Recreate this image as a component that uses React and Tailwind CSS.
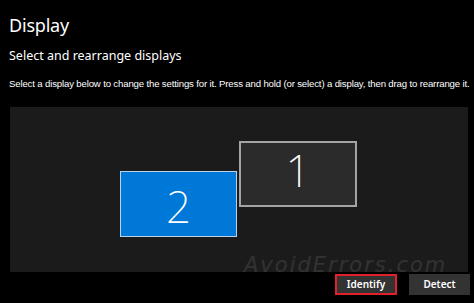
export default function App() {
  return (
    <div className="relative w-[474px] h-[303px] overflow-hidden bg-black text-white font-['Noto_Sans',sans-serif]">
      <div className="px-[9px] pt-[11px]">
        {/* Page title */}
        <h1 className="text-[18px] leading-[28px] font-normal tracking-[-0.2px]">Display</h1>
        <h2 className="mt-[8px] text-[12.5px] leading-[18px]">Select and rearrange displays</h2>
        <p className="mt-[12px] text-[9.6px] leading-[14px] tracking-[-0.15px] whitespace-nowrap font-['Liberation_Sans',sans-serif]">
          Select a display below to change the settings for it. Press and hold (or select) a display, then drag to rearrange it.
        </p>
      </div>

      {/* Arrangement canvas */}
      <div className="relative ml-[10px] mt-[16px] w-[458px] h-[165px] bg-[#1b1b1b]">
        <div className="absolute left-[229px] top-[34px] w-[118px] h-[66px] bg-[#2b2b2b] border-2 border-[#a4a4a4] flex items-center justify-center">
          <span className="text-[44px] font-extralight leading-none -mt-[8px]">1</span>
        </div>
        <div className="absolute left-[110px] top-[64px] w-[117px] h-[66px] bg-[#0078d7] border border-[#b9d3ea] flex items-center justify-center">
          <span className="text-[44px] font-extralight leading-none mt-[4px]">2</span>
        </div>
      </div>

      {/* Buttons */}
      <div className="flex justify-end gap-[12px] pr-[4px] mt-[2px]">
        <button className="w-[62px] h-[21px] bg-[#333333] border-2 border-[#e0212b] text-[10px] font-semibold text-white">Identify</button>
        <button className="w-[61px] h-[21px] bg-[#333333] text-[10px] font-semibold text-white">Detect</button>
      </div>

      {/* Watermark */}
      <div className="absolute left-[244px] top-[258px] text-[21px] leading-[15px] italic tracking-[2px] text-white/10 font-['DejaVu_Sans',sans-serif] pointer-events-none">
        AvoidErrors.com
      </div>
    </div>
  );
}
